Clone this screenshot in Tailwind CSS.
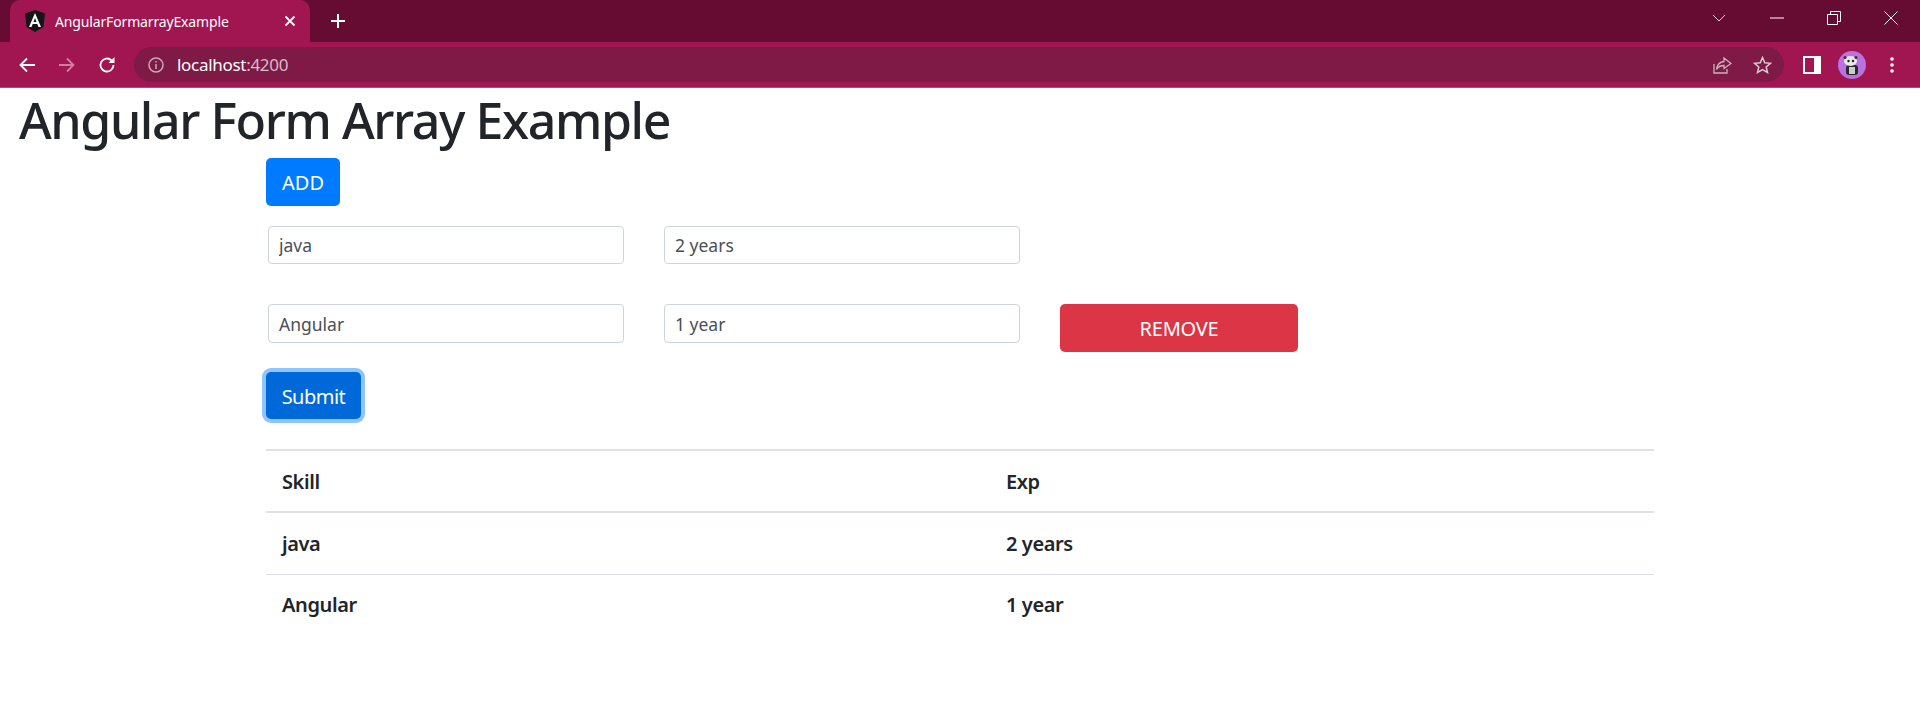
<!DOCTYPE html>
<html lang="en">
<head>
    <meta charset="UTF-8">
    <title>AngularFormarrayExample</title>
    <script src="https://cdn.jsdelivr.net/npm/@tailwindcss/browser@4"></script>
</head>
<body class="bg-white text-[#212529] font-['Noto_Sans',sans-serif] overflow-hidden">
    <!-- tab strip -->
    <div class="h-[42px] bg-[#660c33] flex items-end pl-[10px] text-white">
        <div class="w-[300px] h-[42px] bg-[#a11650] rounded-t-[10px] flex items-center pl-[15px] pr-[14px]">
            <svg class="w-[20px] h-[22px] mr-[10px] shrink-0" viewBox="0 0 20 22"><path d="M10 0L20 3.5L18.5 17L10 22L1.500 17L0 3.500Z" fill="#151515"/><path d="M10 3L4 17H6.500L7.700 14H12.300L13.500 17H16L10 3ZM8.500 12L10 8L11.500 12Z" fill="#fff"/></svg>
            <span class="text-[14px] tracking-[-0.15px] whitespace-nowrap">AngularFormarrayExample</span>
            <svg class="w-[12px] h-[12px] ml-auto" viewBox="0 0 12 12"><path d="M1.500 1.500L10.500 10.500M10.500 1.500L1.500 10.500" stroke="#fff" stroke-width="1.800"/></svg>
        </div>
        <svg class="w-[16px] h-[16px] ml-[20px] mb-[13px]" viewBox="0 0 16 16"><path d="M8 1V15M1 8H15" stroke="#fff" stroke-width="2"/></svg>
        <div class="ml-auto flex items-center h-[42px] mb-[3px]">
            <svg class="w-[14px] h-[8px] mr-[44px]" viewBox="0 0 14 8"><path d="M1 1L7 7L13 1" fill="none" stroke="#e3cdd6" stroke-width="1"/></svg>
            <svg class="w-[14px] h-[2px] mr-[43px]" viewBox="0 0 14 2"><path d="M0 1H14" stroke="#fff" stroke-width="1"/></svg>
            <svg class="w-[14px] h-[14px] mr-[43px]" viewBox="0 0 14 14"><path d="M0.500 3.500H10.500V13.500H0.500ZM3.500 3.500V0.500H13.500V10.500H10.500" fill="none" stroke="#fff" stroke-width="1"/></svg>
            <svg class="w-[14px] h-[14px] mr-[22px]" viewBox="0 0 14 14"><path d="M0.500 0.500L13.500 13.500M13.500 0.500L0.500 13.500" stroke="#fff" stroke-width="1"/></svg>
        </div>
    </div>
    <!-- toolbar -->
    <div class="h-[46px] bg-[#a11650] border-b border-[#b8437a] flex items-center pl-[19px] text-white">
        <svg class="w-[17px] h-[16px] mr-[22px]" viewBox="0 0 17 16"><path d="M16 8H2M8 1.500L1.500 8L8 14.500" fill="none" stroke="#fff" stroke-width="1.800"/></svg>
        <svg class="w-[17px] h-[16px] mr-[23px]" viewBox="0 0 17 16"><path d="M1 8H15M9 1.500L15.500 8L9 14.500" fill="none" stroke="#d07ea0" stroke-width="1.800"/></svg>
        <svg class="w-[18px] h-[18px] mr-[18px]" viewBox="0 0 18 18"><path d="M15.500 9A6.500 6.500 0 1 1 13.500 4.300" fill="none" stroke="#fff" stroke-width="1.800"/><path d="M16.500 1V7H10.500Z" fill="#fff"/></svg>
        <div class="w-[1650px] h-[35px] bg-[#7e1a45] rounded-full flex items-center pl-[14px]">
            <svg class="w-[16px] h-[16px] mr-[13px]" viewBox="0 0 16 16"><circle cx="8" cy="8" r="7" fill="none" stroke="#c9a9b7" stroke-width="1.500"/><path d="M8 7V12M8 4V5.500" stroke="#c9a9b7" stroke-width="1.500"/></svg>
            <span class="text-[17px] tracking-[-0.3px]">localhost<span class="text-[#d8bcc8]">:4200</span></span>
            <svg class="w-[19px] h-[18px] ml-auto mr-[21px]" viewBox="0 0 19 18"><path d="M1 8V17H14V13" fill="none" stroke="#c9b3bd" stroke-width="1.300"/><path d="M11 2L18 7.500L11 12.500V9.500C7 9.500 5 11 3.500 13.500C4 9 7 6 11 5.500Z" fill="none" stroke="#c9b3bd" stroke-width="1.300"/></svg>
            <svg class="w-[19px] h-[18px] mr-[12px]" viewBox="0 0 19 18"><path d="M9.500 1.500L11.800 6.800L17.500 7.300L13.200 11L14.500 16.500L9.500 13.600L4.500 16.500L5.800 11L1.500 7.300L7.200 6.800Z" fill="none" stroke="#dcc9d2" stroke-width="1.500"/></svg>
        </div>
        <svg class="w-[18px] h-[18px] ml-[19px]" viewBox="0 0 18 18"><rect width="18" height="18" fill="#fff"/><rect x="2" y="2" width="9" height="14" fill="#a11650"/></svg>
        <svg class="w-[28px] h-[28px] ml-[17px]" viewBox="0 0 28 28"><circle cx="14" cy="14" r="14" fill="#b873e0"/><rect x="8" y="14" width="12" height="10" rx="3" fill="#2a2a2a"/><rect x="11" y="16" width="6" height="7" fill="#ccc"/><ellipse cx="12.500" cy="10" rx="6.500" ry="5" fill="#e8e8e8"/><circle cx="7" cy="6.500" r="1.500" fill="#333"/><circle cx="18" cy="6.500" r="1.500" fill="#333"/><circle cx="10.500" cy="10" r="1.200" fill="#222"/><circle cx="15" cy="10" r="1.200" fill="#222"/></svg>
        <svg class="w-[4px] h-[16px] ml-[24px]" viewBox="0 0 4 16"><circle cx="2" cy="2" r="1.800" fill="#fff"/><circle cx="2" cy="8" r="1.800" fill="#fff"/><circle cx="2" cy="14" r="1.800" fill="#fff"/></svg>
    </div>
    <!-- page -->
    <h1 class="text-[50px] leading-[60px] font-medium ml-[19px] mt-[2px] whitespace-nowrap tracking-[-1.4px]">Angular Form Array Example</h1>
    <div class="ml-[266px] w-[1388px] mt-[8px]">
        <button class="block h-[48px] w-[74px] pt-[1px] bg-[#007bff] text-white text-[20px] rounded-[5px]">ADD</button>
        <div class="flex mt-[20px] pl-[2px] h-[38px]">
            <input value="java" class="w-[356px] h-[38px] border border-[#ced4da] rounded-[4px] px-[10px] text-[17.500px] text-[#495057]">
            <input value="2 years" class="w-[356px] h-[38px] ml-[40px] border border-[#ced4da] rounded-[4px] px-[10px] text-[17.500px] text-[#495057]">
        </div>
        <div class="flex mt-[40px] pl-[2px] h-[48px]">
            <input value="Angular" class="w-[356px] h-[39px] border border-[#ced4da] rounded-[4px] px-[10px] text-[17.500px] text-[#495057]">
            <input value="1 year" class="w-[356px] h-[39px] ml-[40px] border border-[#ced4da] rounded-[4px] px-[10px] text-[17.500px] text-[#495057]">
            <button class="w-[238px] h-[48px] pt-[1px] ml-[40px] bg-[#dc3545] text-white text-[20px] tracking-[-0.2px] rounded-[5px]">REMOVE</button>
        </div>
        <button class="block h-[47px] w-[95px] pt-[2px] mt-[20px] bg-[#0069d9] text-white text-[20px] tracking-[-0.5px] rounded-[5px] ring-4 ring-[#8fc5ff]">Submit</button>
        <table class="w-full mt-[30px] border-collapse text-[20px] font-semibold tracking-[-0.4px]">
            <tr class="h-[62px] border-t-2 border-b-2 border-[#dee2e6]"><td class="pl-[16px] pt-[2px] w-[725px]">Skill</td><td class="pl-[15px] pt-[2px]">Exp</td></tr>
            <tr class="h-[62px] border-b border-[#dee2e6]"><td class="pl-[16px] pt-[2px]">java</td><td class="pl-[15px] pt-[2px]">2 years</td></tr>
            <tr class="h-[61px]"><td class="pl-[16px]">Angular</td><td class="pl-[15px]">1 year</td></tr>
        </table>
    </div>
</body>
</html>
